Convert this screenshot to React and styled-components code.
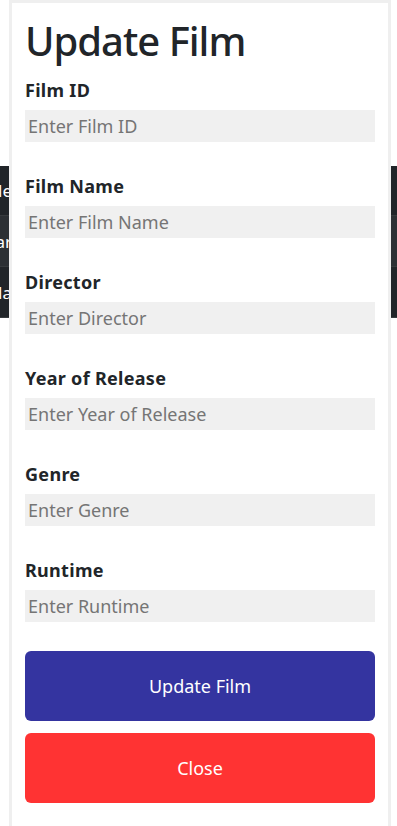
import React from 'react'
import styled, { createGlobalStyle } from 'styled-components'

const GlobalStyle = createGlobalStyle`
    * { box-sizing: border-box; }
    body {
        margin: 0;
        background: #fff;
        font-family: 'Noto Sans', 'Open Sans', sans-serif;
        color: #212529;
    }
`

const Page = styled.div`
    position: relative;
    width: 397px;
    height: 826px;
    overflow: hidden;
`

// dark film table sitting behind the modal
const FilmTable = styled.div`
    position: absolute;
    top: 166px;
    left: 0;
    right: 0;
    display: flex;
    flex-direction: column;
`

const TableRow = styled.div`
    height: ${(props) => props.h}px;
    background: ${(props) => (props.striped ? '#2c3034' : '#212529')};
    border-bottom: 1px solid #373b3e;
    color: #fff;
    font-size: 17px;
    display: flex;
    align-items: center;
`

const CellEnd = styled.span`
    width: 12px;
    overflow: hidden;
    white-space: nowrap;
    direction: rtl;
    text-align: left;
    padding-right: 0;
`

const Modal = styled.div`
    position: relative;
    z-index: 1;
    margin-left: 9px;
    width: 382px;
    min-height: 826px;
    background: #fff;
    border: 3px solid #efefef;
    border-bottom: none;
    padding: 0 13px;
`

const Title = styled.h1`
    margin: 0;
    padding-top: 14px;
    font-size: 40px;
    font-weight: 500;
    line-height: 48px;
    letter-spacing: -1px;
`

const Field = styled.div`
    display: flex;
    flex-direction: column;
    margin-top: ${(props) => (props.first ? 13 : 32)}px;
`

const Label = styled.label`
    font-size: 18px;
    font-weight: 700;
    line-height: 24px;
    margin-bottom: 8px;
    letter-spacing: 0.3px;
`

const Input = styled.input`
    height: 32px;
    border: none;
    background: #f0f0f0;
    padding: 0 3px;
    font-family: inherit;
    font-size: 18px;
    color: #212529;
    outline: none;
    &::placeholder {
        color: #757575;
    }
`

const Actions = styled.div`
    display: flex;
    flex-direction: column;
    gap: 12px;
    margin-top: 29px;
`

const Button = styled.button`
    height: 70px;
    border: none;
    border-radius: 6px;
    background: ${(props) => props.bg};
    color: #fff;
    font-family: inherit;
    font-size: 18px;
`

const fields = [
    ['Film ID', 'Enter Film ID'],
    ['Film Name', 'Enter Film Name'],
    ['Director', 'Enter Director'],
    ['Year of Release', 'Enter Year of Release'],
    ['Genre', 'Enter Genre'],
    ['Runtime', 'Enter Runtime'],
]

const App = () => {
    return (
        <Page>
            <GlobalStyle />
            <FilmTable>
                <TableRow h={50}>
                    <CellEnd>Title</CellEnd>
                </TableRow>
                <TableRow h={51} striped>
                    <CellEnd>Year</CellEnd>
                </TableRow>
                <TableRow h={51}>
                    <CellEnd>Mala</CellEnd>
                </TableRow>
            </FilmTable>
            <Modal>
                <Title>Update Film</Title>
                {fields.map(([label, placeholder], i) => (
                    <Field key={label} first={i === 0}>
                        <Label>{label}</Label>
                        <Input placeholder={placeholder} />
                    </Field>
                ))}
                <Actions>
                    <Button bg='#3434a0'>Update Film</Button>
                    <Button bg='#ff3333'>Close</Button>
                </Actions>
            </Modal>
        </Page>
    )
}

export default App
